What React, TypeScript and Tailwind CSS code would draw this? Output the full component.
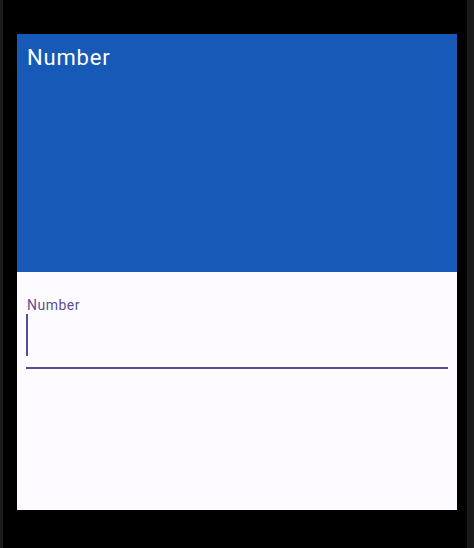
import React from "react";

export default function App() {
  return (
    <div
      className="flex h-[548px] w-[474px] bg-black"
      style={{ fontFamily: "Roboto, 'Noto Sans', sans-serif" }}
    >
      <div className="h-full w-[3px] bg-[#1c1c1c]" />
      <div className="flex flex-1 pt-[34px] pl-[14px]">
        <div className="flex h-[476px] w-[440px] flex-col bg-[#fdfbff]">
          <div className="h-[238px] bg-[#1659b6] pl-[10px] pt-[10px]">
            <div className="text-[22px] leading-[28px] tracking-[0.8px] text-white">Number</div>
          </div>
          <div className="flex flex-col px-[9px] pt-[25px]">
            <div className="pl-[1px] text-[14px] leading-[17px] tracking-[0.5px] text-[#5a4f8e]">Number</div>
            <div className="h-[42px] w-[2px] bg-[#5a4a9a]" />
            <div className="mt-[11px] h-[2px] w-full bg-[#5a4a9a]" />
          </div>
        </div>
      </div>
      <div className="h-full w-[7px] bg-[#1a1a1a]" />
    </div>
  );
}
